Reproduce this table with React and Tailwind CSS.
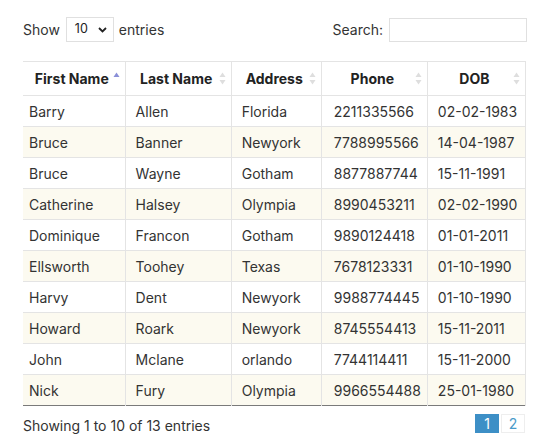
import React from "react";

const rows = [
  ["Barry", "Allen", "Florida", "2211335566", "02-02-1983"],
  ["Bruce", "Banner", "Newyork", "7788995566", "14-04-1987"],
  ["Bruce", "Wayne", "Gotham", "8877887744", "15-11-1991"],
  ["Catherine", "Halsey", "Olympia", "8990453211", "02-02-1990"],
  ["Dominique", "Francon", "Gotham", "9890124418", "01-01-2011"],
  ["Ellsworth", "Toohey", "Texas", "7678123331", "01-10-1990"],
  ["Harvy", "Dent", "Newyork", "9988774445", "01-10-1990"],
  ["Howard", "Roark", "Newyork", "8745554413", "15-11-2011"],
  ["John", "Mclane", "orlando", "7744114411", "15-11-2000"],
  ["Nick", "Fury", "Olympia", "9966554488", "25-01-1980"],
];

const cols = [
  { name: "First Name", w: "w-[102px]", active: true },
  { name: "Last Name", w: "w-[106px]" },
  { name: "Address", w: "w-[90px]" },
  { name: "Phone", w: "w-[106px]" },
  { name: "DOB", w: "w-[98px]" },
];

function SortIcon({ active }) {
  return (
    <svg width="7" height="13" viewBox="0 0 7 13" className="absolute right-[5px] top-[10px]">
      <path d="M3.5 0.5 L6.5 5 L0.5 5 Z" fill={active ? "#8a8fd8" : "#dedede"} />
      {!active && <path d="M3.5 12.5 L6.5 8 L0.5 8 Z" fill="#dedede" />}
    </svg>
  );
}

export default function App() {
  return (
    <div className="w-[550px] h-[446px] bg-white text-[#333] font-['Inter',sans-serif] text-[14px]">
      <div className="px-[23px] pt-[17px]">
        <div className="flex items-center justify-between h-[25px]">
          <div className="flex items-center">
            <span>Show</span>
            <div className="ml-[6px] w-[48px] h-[25px] border border-[#e0e0e0] flex items-center justify-between pl-[8px] pr-[6px] text-[12.5px] text-[#222]">
              <span>10</span>
              <svg width="9" height="6" viewBox="0 0 9 6"><path d="M1 1 L4.5 4.5 L8 1" stroke="#222" strokeWidth="1.8" fill="none" /></svg>
            </div>
            <span className="ml-[5px]">entries</span>
          </div>
          <div className="flex items-center">
            <span>Search:</span>
            <div className="ml-[6px] w-[138px] h-[24px] border border-[#e0e0e0]"></div>
          </div>
        </div>
        <table className="mt-[19px] w-[503px] border-collapse table-fixed">
          <thead>
            <tr className="h-[34px]">
              {cols.map((c) => (
                <th
                  key={c.name}
                  className={`${c.w} relative border-t border-r border-[#e4e4e4] font-bold text-[#222] text-center pr-[4px]`}
                >
                  {c.name}
                  <SortIcon active={c.active} />
                </th>
              ))}
            </tr>
          </thead>
          <tbody className="border-b border-[#7a7a7a]">
            {rows.map((r, ri) => (
              <tr key={ri} className={`h-[31px] ${ri % 2 === 1 ? "bg-[#fcfaf0]" : "bg-white"}`}>
                {r.map((v, ci) => (
                  <td
                    key={ci}
                    className={`border-t border-r border-[#e4e4e4] ${ci === 0 ? "pl-[6px]" : ci === 3 ? "pl-[12px]" : "pl-[10px]"}`}
                  >
                    {v}
                  </td>
                ))}
              </tr>
            ))}
          </tbody>
        </table>
        <div className="flex items-center justify-between mt-[5px]">
          <span className="pt-[4px]">Showing 1 to 10 of 13 entries</span>
          <div className="flex items-center gap-[2px] text-[14px] mr-[2px]">
            <div className="w-[24px] h-[19px] bg-[#3d8fc6] text-white flex items-center justify-center">1</div>
            <div className="w-[24px] h-[19px] border border-[#eeeeee] text-[#4a9ac9] flex items-center justify-center">2</div>
          </div>
        </div>
      </div>
    </div>
  );
}
